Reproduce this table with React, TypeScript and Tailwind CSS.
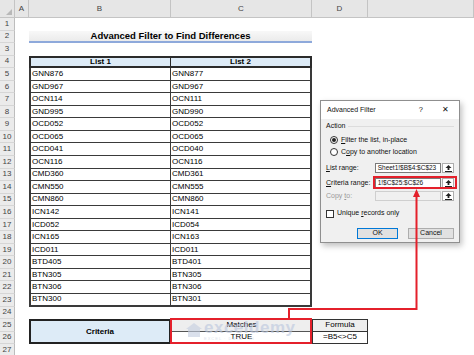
import type { ReactNode } from "react";
import clsx from "clsx";

const rows: Array<[string, string]> = [
  ["GNN876", "GNN877"],
  ["GND967", "GND967"],
  ["OCN114", "OCN111"],
  ["GND995", "GND990"],
  ["OCD052", "OCD052"],
  ["OCD065", "OCD065"],
  ["OCD041", "OCD040"],
  ["OCN116", "OCN116"],
  ["CMD360", "CMD361"],
  ["CMN550", "CMN555"],
  ["CMN860", "CMN860"],
  ["ICN142", "ICN141"],
  ["ICD052", "ICD054"],
  ["ICN165", "ICN163"],
  ["ICD011", "ICD011"],
  ["BTD405", "BTD401"],
  ["BTN305", "BTN305"],
  ["BTN306", "BTN306"],
  ["BTN300", "BTN301"],
];

function ColHead({ label }: { label?: string }) {
  return (
    <div className="flex items-center justify-center border-r border-b border-[#c4c4c4] bg-[#e6e6e6] text-[8px] text-[#444]">
      {label}
    </div>
  );
}

function RowHead({ n }: { n: number }) {
  return (
    <div className="flex items-center justify-center border-r border-b border-r-[#bdbdbd] border-b-[#d6d6d6] bg-[#ebebeb] text-[8px] text-[#444]">
      {n}
    </div>
  );
}

function Cell({ className, children }: { className?: string; children?: ReactNode }) {
  return (
    <div className={clsx("flex items-center overflow-hidden whitespace-nowrap text-[8px] text-black", className)}>
      {children}
    </div>
  );
}

function CollapseBtn() {
  return (
    <div className="flex h-full w-[12px] items-center justify-center border border-[#adadad] bg-white">
      <svg width="7" height="7" viewBox="0 0 7 7">
        <polygon points="3.5,0 0.5,3 6.5,3" fill="#222" />
        <rect x="2.6" y="3" width="1.8" height="2" fill="#222" />
        <rect x="0" y="6" width="7" height="1" fill="#222" />
      </svg>
    </div>
  );
}

function Radio({ checked }: { checked?: boolean }) {
  return (
    <span className="flex h-[8px] w-[8px] items-center justify-center rounded-full border border-[#333] bg-white">
      {checked && <span className="h-[4px] w-[4px] rounded-full bg-[#222]" />}
    </span>
  );
}

function AdvancedFilterDialog() {
  return (
    <div className="absolute left-[320px] top-[100px] flex h-[143px] w-[140px] flex-col border border-[#8f8f8f] bg-[#f0f0f0] text-[7px] text-[#111] shadow-[2px_3px_6px_rgba(0,0,0,0.25)]">
      <div className="flex h-[18px] items-center bg-white pl-[6px] pr-[10px]">
        <span>Advanced Filter</span>
        <span className="ml-auto mr-[19px] text-[7.5px]">?</span>
        <span className="text-[8px]">✕</span>
      </div>
      <div className="flex flex-col px-[5px]">
        <div className="mt-[2px] flex h-[10px] items-center gap-[3px]">
          <span>Action</span>
          <span className="h-px flex-1 bg-[#dcdcdc]" />
        </div>
        <div className="mt-[3px] flex h-[12px] items-center gap-[3px] pl-[4px]">
          <Radio checked />
          <span>
            <u>F</u>ilter the list, in-place
          </span>
        </div>
        <div className="flex h-[12px] items-center gap-[3px] pl-[4px]">
          <Radio />
          <span>
            C<u>o</u>py to another location
          </span>
        </div>
        <div className="mt-[5px] flex h-[10px] items-center">
          <span className="w-[50px]">
            <u>L</u>ist range:
          </span>
          <div className="flex h-full w-[68px] items-center border border-[#7a7a7a] bg-white pl-[2px] text-[6.5px]">
            Sheet1!$B$4:$C$23
          </div>
          <div className="ml-[1px] h-full">
            <CollapseBtn />
          </div>
        </div>
        <div className="mt-[5px] flex h-[10px] items-center">
          <span className="w-[50px]">
            <u>C</u>riteria range:
          </span>
          <div className="flex h-full w-[68px] items-center border border-[#7a7a7a] bg-white pl-[2px] text-[6.5px]">
            1!$C$25:$C$26
          </div>
          <div className="ml-[1px] h-full">
            <CollapseBtn />
          </div>
        </div>
        <div className="mt-[3px] flex h-[10px] items-center">
          <span className="w-[50px] text-[#9a9a9a]">
            Copy <u>t</u>o:
          </span>
          <div className="h-full w-[68px] border border-[#cfcfcf] bg-[#f0f0f0]" />
          <div className="ml-[1px] h-full">
            <CollapseBtn />
          </div>
        </div>
        <div className="mt-[8px] flex h-[9px] items-center gap-[3px]">
          <span className="h-[8px] w-[8px] border border-[#333] bg-white" />
          <span>
            Unique <u>r</u>ecords only
          </span>
        </div>
        <div className="mt-[10px] flex h-[11px] justify-end gap-[10px] pr-[-1px]">
          <div className="flex w-[41px] items-center justify-center border border-[#0078d7] bg-[#e1e1e1]">OK</div>
          <div className="flex w-[46px] items-center justify-center border border-[#adadad] bg-[#e1e1e1]">Cancel</div>
        </div>
      </div>
    </div>
  );
}

export default function App() {
  const sheet: ReactNode[] = [];

  // column headers
  sheet.push(
    <div key="corner" className="relative border-r border-b border-[#c4c4c4] bg-[#e6e6e6]">
      <span className="absolute bottom-[2px] right-[2px] h-0 w-0 border-b-[6px] border-l-[6px] border-b-[#b8b8b8] border-l-transparent" />
    </div>,
  );
  ["A", "B", "C", "D", ""].forEach((c) => sheet.push(<ColHead key={`col-${c}`} label={c} />));

  for (let n = 1; n <= 27; n++) {
    sheet.push(<RowHead key={`rh-${n}`} n={n} />);
    sheet.push(<div key={`a-${n}`} />);

    if (n === 2) {
      sheet.push(
        <Cell
          key="title"
          className="col-span-2 justify-center border-b-2 border-[#8ea9db] bg-linear-to-b from-[#f8f8f8] to-[#ebebeb] text-[9.5px] font-bold text-[#44546a]"
        >
          Advanced Filter to Find Differences
        </Cell>,
      );
    } else if (n === 4) {
      sheet.push(
        <Cell key="h1" className="justify-center border-2 border-r border-[#2b2b2b] bg-[#ddebf7] font-bold">
          List 1
        </Cell>,
      );
      sheet.push(
        <Cell key="h2" className="justify-center border-y-2 border-r-2 border-[#2b2b2b] bg-[#ddebf7] font-bold">
          List 2
        </Cell>,
      );
    } else if (n >= 5 && n <= 23) {
      const [l1, l2] = rows[n - 5];
      const last = n === 23;
      sheet.push(
        <Cell
          key={`b-${n}`}
          className={clsx("border-l-2 border-r border-[#3a3a3a] pl-[1px]", last ? "border-b-2" : "border-b")}
        >
          {l1}
        </Cell>,
      );
      sheet.push(
        <Cell key={`c-${n}`} className={clsx("border-r-2 border-[#3a3a3a] pl-[1px]", last ? "border-b-2" : "border-b")}>
          {l2}
        </Cell>,
      );
    } else if (n === 25) {
      sheet.push(
        <Cell key="crit" className="row-span-2 justify-center border-2 border-[#222] bg-[#ddebf7] font-bold">
          Criteria
        </Cell>,
      );
      sheet.push(
        <Cell key="match" className="justify-center border-y border-[#555] bg-[#eeeeee]">
          Matches
        </Cell>,
      );
    } else if (n === 26) {
      sheet.push(
        <Cell key="true" className="justify-center border-b border-[#555]">
          TRUE
        </Cell>,
      );
    } else {
      sheet.push(<div key={`b-${n}`} />);
      sheet.push(<div key={`c-${n}`} />);
    }

    if (n === 25) {
      sheet.push(
        <Cell key="formula" className="justify-center border border-[#333] bg-[#eeeeee]">
          Formula
        </Cell>,
      );
    } else if (n === 26) {
      sheet.push(
        <Cell key="fx" className="justify-center border-x border-b border-[#333]">
          =B5&lt;&gt;C5
        </Cell>,
      );
    } else if (n !== 2) {
      sheet.push(<div key={`d-${n}`} />);
    } else {
      sheet.push(<div key={`d-${n}`} />);
    }
    sheet.push(<div key={`e-${n}`} />);
  }

  return (
    <div className="relative h-[355px] w-[474px] overflow-hidden bg-white font-['Liberation_Sans',Arial,sans-serif]">
      <div className="grid grid-cols-[15px_14px_142px_141px_56px_1fr] grid-rows-[18px_repeat(27,12.56px)]">
        {sheet}
      </div>

      {/* watermark */}
      <div className="pointer-events-none absolute left-[186px] top-[319px] flex items-center gap-[2px] opacity-60">
        <svg width="16" height="14" viewBox="0 0 16 14">
          <polygon points="8,0 16,6 14,6 14,14 2,14 2,6 0,6" fill="#c3cde0" />
        </svg>
        <div className="flex flex-col leading-none">
          <span className="text-[17px] font-bold tracking-[0.5px] text-[#b9c6de]">exceldemy</span>
          <span className="mt-[1px] text-[4px] tracking-[1px] text-[#c9d2e3]">EXCEL · DATA · BI</span>
        </div>
      </div>

      {/* highlight on C25:C26 */}
      <div className="absolute left-[170px] top-[318px] h-[26px] w-[142px] border-2 border-[#e4202b]" />

      <AdvancedFilterDialog />

      {/* highlight on criteria range */}
      <div className="absolute left-[373px] top-[176px] h-[13px] w-[84px] border-2 border-[#e4202b]" />

      {/* connector arrow */}
      <svg className="pointer-events-none absolute left-0 top-0" width="474" height="355">
        <polyline points="416.5,195 416.5,309 289,309 289,318" fill="none" stroke="#e4202b" strokeWidth="2" />
        <polygon points="416.5,189 413,197 420,197" fill="#e4202b" />
      </svg>
    </div>
  );
}
